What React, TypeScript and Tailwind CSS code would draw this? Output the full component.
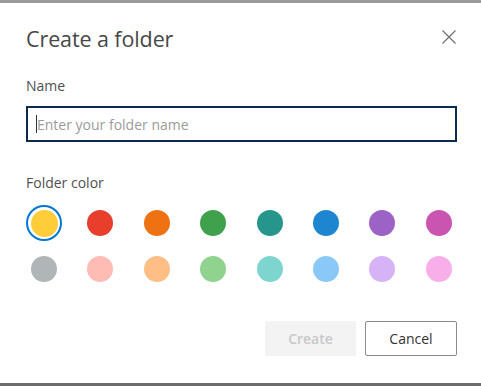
const COLORS = [
  '#ffcc3a',
  '#e83e2c',
  '#ef7212',
  '#3fa14b',
  '#26958b',
  '#1e86d1',
  '#9c62c6',
  '#c955b1',
  '#b0b5b8',
  '#ffbcb5',
  '#ffbe86',
  '#8fd38f',
  '#7ed4cf',
  '#8ac9f7',
  '#d6b2f6',
  '#f8aee8',
]

const CloseIcon = () => (
  <svg width="14" height="14" viewBox="0 0 14 14" fill="none" stroke="#6b6b6b" strokeWidth="1.1">
    <path d="M0.5 0.5 L13.5 13.5 M13.5 0.5 L0.5 13.5" />
  </svg>
)

const App = () => {
  const selected = 0

  return (
    <div
      className="w-[481px] h-[386px] flex flex-col bg-white"
      style={{ fontFamily: '"Open Sans", "Noto Sans", sans-serif' }}
    >
      <div className="h-[3px] bg-[#9a9a9a]" />

      <div className="flex-1 flex flex-col pl-[26px] pr-[24px]">
        {/* Header */}
        <div className="flex items-start justify-between pt-[20px]">
          <h1 className="text-[21.5px] leading-[32px] text-[#474747] tracking-[-0.1px]">
            Create a folder
          </h1>
          <button type="button" className="mt-[7px] mr-[1px]">
            <CloseIcon />
          </button>
        </div>

        {/* Name */}
        <label className="mt-[21px] text-[14px] leading-[20px] font-medium text-[#4f4f4f]">
          Name
        </label>
        <div className="mt-[10px] h-[36px] border-2 border-[#0c2a4c] flex items-center pl-[8px]">
          <span className="w-px h-[18px] bg-[#333333]" />
          <input
            type="text"
            placeholder="Enter your folder name"
            className="flex-1 outline-none text-[14px] text-[#333333] placeholder:text-[#9b9b9b] bg-transparent"
          />
        </div>

        {/* Folder color */}
        <div className="mt-[31px] text-[14px] leading-[20px] font-medium text-[#4f4f4f]">
          Folder color
        </div>
        <div className="mt-[11px] grid grid-cols-8 gap-y-[8px] ml-[-1px] w-[451px]">
          {COLORS.map((c, i) => (
            <div key={c} className="w-[38px] h-[38px] flex items-center justify-center">
              {i === selected ? (
                <div className="w-[36px] h-[36px] rounded-full border-2 border-[#0078d4] flex items-center justify-center">
                  <div className="w-[27px] h-[27px] rounded-full" style={{ background: c }} />
                </div>
              ) : (
                <div className="w-[26px] h-[26px] rounded-full" style={{ background: c }} />
              )}
            </div>
          ))}
        </div>

        {/* Footer */}
        <div className="mt-auto mb-[27px] flex justify-end gap-[9px]">
          <button
            type="button"
            disabled
            className="w-[91px] h-[35px] rounded-[2px] bg-[#f3f3f3] text-[14px] font-semibold text-[#c8c8c8]"
          >
            Create
          </button>
          <button
            type="button"
            className="w-[92px] h-[35px] rounded-[2px] border border-[#8a8a8a] bg-white text-[14px] text-[#333333]"
          >
            Cancel
          </button>
        </div>
      </div>

      <div className="h-[3px] bg-[#6c6c6c]" />
    </div>
  )
}

export default App
